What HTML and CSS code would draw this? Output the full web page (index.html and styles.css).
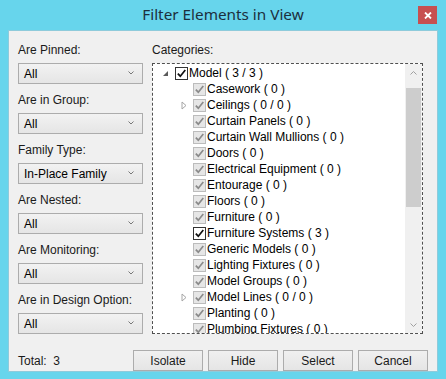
FILE: index.html
```html
<!DOCTYPE html>
<html>
<head>
<meta charset="utf-8">
<link rel="stylesheet" href="styles.css">
</head>
<body>
<div class="window">
  <div class="titlebar">
    <span class="title">Filter Elements in View</span>
    <button class="close" aria-label="Close"><svg width="8" height="7" viewBox="0 0 8 7"><path d="M1 0.5 L7 6.5 M7 0.5 L1 6.5" stroke="#fff" stroke-width="1.8"/></svg></button>
  </div>
  <div class="client">
    <div class="main">
      <div class="filters">
        <div class="field"><div class="label">Are Pinned:</div><div class="combo"><span>All</span><svg class="chev" width="6" height="4" viewBox="0 0 6 4"><path d="M0.5 0.5 L3 3 L5.5 0.5" fill="none" stroke="#777" stroke-width="1"/></svg></div></div>
        <div class="field"><div class="label">Are in Group:</div><div class="combo"><span>All</span><svg class="chev" width="6" height="4" viewBox="0 0 6 4"><path d="M0.5 0.5 L3 3 L5.5 0.5" fill="none" stroke="#777" stroke-width="1"/></svg></div></div>
        <div class="field"><div class="label">Family Type:</div><div class="combo"><span>In-Place Family</span><svg class="chev" width="6" height="4" viewBox="0 0 6 4"><path d="M0.5 0.5 L3 3 L5.5 0.5" fill="none" stroke="#777" stroke-width="1"/></svg></div></div>
        <div class="field"><div class="label">Are Nested:</div><div class="combo"><span>All</span><svg class="chev" width="6" height="4" viewBox="0 0 6 4"><path d="M0.5 0.5 L3 3 L5.5 0.5" fill="none" stroke="#777" stroke-width="1"/></svg></div></div>
        <div class="field"><div class="label">Are Monitoring:</div><div class="combo"><span>All</span><svg class="chev" width="6" height="4" viewBox="0 0 6 4"><path d="M0.5 0.5 L3 3 L5.5 0.5" fill="none" stroke="#777" stroke-width="1"/></svg></div></div>
        <div class="field"><div class="label">Are in Design Option:</div><div class="combo"><span>All</span><svg class="chev" width="6" height="4" viewBox="0 0 6 4"><path d="M0.5 0.5 L3 3 L5.5 0.5" fill="none" stroke="#777" stroke-width="1"/></svg></div></div>
      </div>
      <div class="categories">
        <div class="label">Categories:</div>
        <div class="tree">
          <div class="rows">
            <div class="row l0"><span class="exp"><svg width="7" height="7" viewBox="0 0 7 7"><path d="M6 1 L6 6 L1 6 Z" fill="#5a5a5a"/></svg></span><span class="cb on"><svg width="11" height="11" viewBox="0 0 11 11"><path d="M1.8 5.6 L4.3 8.2 L9.3 2" fill="none" stroke="#111" stroke-width="1.7"/></svg></span><span class="txt">Model ( 3 / 3 )</span></div>
            <div class="row l1"><span class="exp"></span><span class="cb dis"><svg width="11" height="11" viewBox="0 0 11 11"><path d="M1.8 5.6 L4.3 8.2 L9.3 2" fill="none" stroke="#8a8a8a" stroke-width="1.7"/></svg></span><span class="txt">Casework ( 0 )</span></div>
            <div class="row l1"><span class="exp"><svg width="6" height="9" viewBox="0 0 6 9"><path d="M1 1 L5 4.5 L1 8 Z" fill="none" stroke="#a6a6a6" stroke-width="1"/></svg></span><span class="cb dis"><svg width="11" height="11" viewBox="0 0 11 11"><path d="M1.8 5.6 L4.3 8.2 L9.3 2" fill="none" stroke="#8a8a8a" stroke-width="1.7"/></svg></span><span class="txt">Ceilings ( 0 / 0 )</span></div>
            <div class="row l1"><span class="exp"></span><span class="cb dis"><svg width="11" height="11" viewBox="0 0 11 11"><path d="M1.8 5.6 L4.3 8.2 L9.3 2" fill="none" stroke="#8a8a8a" stroke-width="1.7"/></svg></span><span class="txt">Curtain Panels ( 0 )</span></div>
            <div class="row l1"><span class="exp"></span><span class="cb dis"><svg width="11" height="11" viewBox="0 0 11 11"><path d="M1.8 5.6 L4.3 8.2 L9.3 2" fill="none" stroke="#8a8a8a" stroke-width="1.7"/></svg></span><span class="txt">Curtain Wall Mullions ( 0 )</span></div>
            <div class="row l1"><span class="exp"></span><span class="cb dis"><svg width="11" height="11" viewBox="0 0 11 11"><path d="M1.8 5.6 L4.3 8.2 L9.3 2" fill="none" stroke="#8a8a8a" stroke-width="1.7"/></svg></span><span class="txt">Doors ( 0 )</span></div>
            <div class="row l1"><span class="exp"></span><span class="cb dis"><svg width="11" height="11" viewBox="0 0 11 11"><path d="M1.8 5.6 L4.3 8.2 L9.3 2" fill="none" stroke="#8a8a8a" stroke-width="1.7"/></svg></span><span class="txt">Electrical Equipment ( 0 )</span></div>
            <div class="row l1"><span class="exp"></span><span class="cb dis"><svg width="11" height="11" viewBox="0 0 11 11"><path d="M1.8 5.6 L4.3 8.2 L9.3 2" fill="none" stroke="#8a8a8a" stroke-width="1.7"/></svg></span><span class="txt">Entourage ( 0 )</span></div>
            <div class="row l1"><span class="exp"></span><span class="cb dis"><svg width="11" height="11" viewBox="0 0 11 11"><path d="M1.8 5.6 L4.3 8.2 L9.3 2" fill="none" stroke="#8a8a8a" stroke-width="1.7"/></svg></span><span class="txt">Floors ( 0 )</span></div>
            <div class="row l1"><span class="exp"></span><span class="cb dis"><svg width="11" height="11" viewBox="0 0 11 11"><path d="M1.8 5.6 L4.3 8.2 L9.3 2" fill="none" stroke="#8a8a8a" stroke-width="1.7"/></svg></span><span class="txt">Furniture ( 0 )</span></div>
            <div class="row l1"><span class="exp"></span><span class="cb on"><svg width="11" height="11" viewBox="0 0 11 11"><path d="M1.8 5.6 L4.3 8.2 L9.3 2" fill="none" stroke="#111" stroke-width="1.7"/></svg></span><span class="txt">Furniture Systems ( 3 )</span></div>
            <div class="row l1"><span class="exp"></span><span class="cb dis"><svg width="11" height="11" viewBox="0 0 11 11"><path d="M1.8 5.6 L4.3 8.2 L9.3 2" fill="none" stroke="#8a8a8a" stroke-width="1.7"/></svg></span><span class="txt">Generic Models ( 0 )</span></div>
            <div class="row l1"><span class="exp"></span><span class="cb dis"><svg width="11" height="11" viewBox="0 0 11 11"><path d="M1.8 5.6 L4.3 8.2 L9.3 2" fill="none" stroke="#8a8a8a" stroke-width="1.7"/></svg></span><span class="txt">Lighting Fixtures ( 0 )</span></div>
            <div class="row l1"><span class="exp"></span><span class="cb dis"><svg width="11" height="11" viewBox="0 0 11 11"><path d="M1.8 5.6 L4.3 8.2 L9.3 2" fill="none" stroke="#8a8a8a" stroke-width="1.7"/></svg></span><span class="txt">Model Groups ( 0 )</span></div>
            <div class="row l1"><span class="exp"><svg width="6" height="9" viewBox="0 0 6 9"><path d="M1 1 L5 4.5 L1 8 Z" fill="none" stroke="#a6a6a6" stroke-width="1"/></svg></span><span class="cb dis"><svg width="11" height="11" viewBox="0 0 11 11"><path d="M1.8 5.6 L4.3 8.2 L9.3 2" fill="none" stroke="#8a8a8a" stroke-width="1.7"/></svg></span><span class="txt">Model Lines ( 0 / 0 )</span></div>
            <div class="row l1"><span class="exp"></span><span class="cb dis"><svg width="11" height="11" viewBox="0 0 11 11"><path d="M1.8 5.6 L4.3 8.2 L9.3 2" fill="none" stroke="#8a8a8a" stroke-width="1.7"/></svg></span><span class="txt">Planting ( 0 )</span></div>
            <div class="row l1"><span class="exp"></span><span class="cb dis"><svg width="11" height="11" viewBox="0 0 11 11"><path d="M1.8 5.6 L4.3 8.2 L9.3 2" fill="none" stroke="#8a8a8a" stroke-width="1.7"/></svg></span><span class="txt">Plumbing Fixtures ( 0 )</span></div>
          </div>
          <div class="scrollbar">
            <div class="sb-btn"><svg width="7" height="4" viewBox="0 0 7 4"><path d="M0.5 3.5 L3.5 0.5 L6.5 3.5" fill="none" stroke="#a0a0a0" stroke-width="1"/></svg></div>
            <div class="sb-track"><div class="sb-thumb"></div></div>
            <div class="sb-btn"><svg width="7" height="4" viewBox="0 0 7 4"><path d="M0.5 0.5 L3.5 3.5 L6.5 0.5" fill="none" stroke="#a0a0a0" stroke-width="1"/></svg></div>
          </div>
        </div>
      </div>
    </div>
    <div class="footer">
      <div class="total">Total:&nbsp; 3</div>
      <div class="buttons">
        <button class="btn">Isolate</button>
        <button class="btn">Hide</button>
        <button class="btn">Select</button>
        <button class="btn">Cancel</button>
      </div>
    </div>
  </div>
</div>
</body>
</html>
```
FILE: styles.css
```css
* { box-sizing: border-box; }
html, body { margin: 0; padding: 0; }
body {
  width: 446px;
  height: 379px;
  overflow: hidden;
  font-family: "Liberation Sans", Arial, sans-serif;
  font-size: 12px;
  color: #1a1a1a;
}
.window {
  width: 446px;
  height: 379px;
  background: #67d5ec;
  padding: 0 8px 8px 8px;
  display: flex;
  flex-direction: column;
}
.titlebar {
  height: 30px;
  flex: none;
  position: relative;
  display: flex;
  align-items: center;
  justify-content: center;
}
.title {
  font-family: "Noto Sans", "Open Sans", sans-serif;
  font-size: 15.3px;
  color: #1c2f3d;
  margin-top: -2px;
}
.close {
  position: absolute;
  right: 1px;
  top: 6px;
  width: 19px;
  height: 18px;
  border: none;
  padding: 0;
  background: #c75050;
  display: flex;
  align-items: center;
  justify-content: center;
}
.client {
  flex: 1;
  background: #f0f0f0;
  border: 1px solid #8ecbdb;
  padding: 11px 9px 0 9px;
  display: flex;
  flex-direction: column;
}
.main {
  display: flex;
  gap: 9px;
}
.filters {
  width: 125px;
  display: flex;
  flex-direction: column;
}
.field { margin-bottom: 8px; }
.label {
  height: 16px;
  line-height: 16px;
  margin-bottom: 5px;
  color: #1a1a1a;
}
.combo {
  height: 21px;
  border: 1px solid #acacac;
  background: linear-gradient(#f2f2f2, #e5e5e5);
  display: flex;
  align-items: center;
  justify-content: space-between;
  padding: 0 8px 0 5px;
  color: #000;
}
.chev { margin-top: -2px; }
.categories {
  width: 271px;
  display: flex;
  flex-direction: column;
}
.tree {
  height: 271px;
  border: 1px dashed #505050;
  background: #fff;
  display: flex;
  overflow: hidden;
}
.rows {
  flex: 1;
  padding: 1px 0 0 4px;
  overflow: hidden;
}
.row {
  height: 16px;
  display: flex;
  align-items: center;
  white-space: nowrap;
  color: #000;
}
.row.l1 { padding-left: 18px; }
.exp {
  width: 17px;
  height: 16px;
  display: flex;
  align-items: center;
  justify-content: center;
  flex: none;
}
.cb {
  width: 13px;
  height: 13px;
  margin-left: 1px;
  flex: none;
  display: flex;
  align-items: center;
  justify-content: center;
}
.cb.on { border: 1px solid #333; background: #fff; }
.cb.dis { border: 1px solid #bcbcbc; background: #e6e6e6; }
.txt { margin-left: 1px; }
.scrollbar {
  width: 17px;
  flex: none;
  background: #f0f0f0;
  display: flex;
  flex-direction: column;
}
.sb-btn {
  height: 17px;
  flex: none;
  display: flex;
  align-items: center;
  justify-content: center;
}
.sb-track {
  flex: 1;
  padding: 7px 0 0 1px;
}
.sb-thumb {
  height: 119px;
  width: 15px;
  background: #cdcdcd;
}
.footer {
  margin-top: 8px;
  display: flex;
  align-items: center;
  justify-content: space-between;
}
.total { color: #1a1a1a; }
.buttons {
  display: flex;
  gap: 5px;
}
.btn {
  width: 70px;
  height: 21px;
  border: 1px solid #acacac;
  background: linear-gradient(#f0f0f0, #e5e5e5);
  font-family: "Liberation Sans", Arial, sans-serif;
  font-size: 12px;
  color: #1a1a1a;
  padding: 0;
}
```
